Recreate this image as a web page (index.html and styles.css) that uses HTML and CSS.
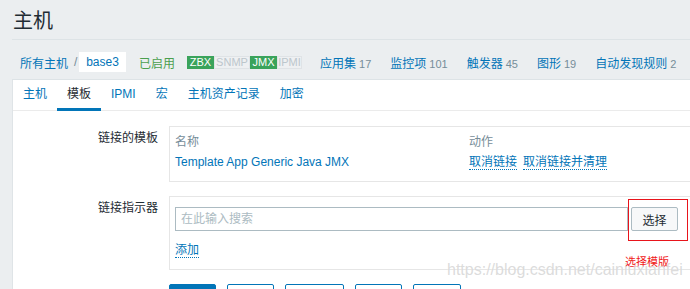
FILE: index.html
```html
<!DOCTYPE html>
<html lang="zh">
<head>
<meta charset="utf-8">
<link rel="stylesheet" href="styles.css">
</head>
<body>
<div class="page">
  <header class="header"><h1 class="title">主机</h1></header>
  <nav class="nav">
    <div class="crumbs">
      <a class="link">所有主机</a>
      <span class="sep">/</span>
      <span class="current">base3</span>
    </div>
    <span class="status">已启用</span>
    <div class="tags">
      <span class="tag on w27">ZBX</span><span class="tag off w36">SNMP</span><span class="tag on w27">JMX</span><span class="tag off w25">IPMI</span>
    </div>
    <div class="counts">
      <a class="link">应用集<span class="num">17</span></a>
      <a class="link">监控项<span class="num">101</span></a>
      <a class="link">触发器<span class="num">45</span></a>
      <a class="link">图形<span class="num">19</span></a>
      <a class="link">自动发现规则<span class="num">2</span></a>
    </div>
  </nav>
  <section class="panel">
    <ul class="tabs">
      <li class="tab">主机</li>
      <li class="tab active">模板</li>
      <li class="tab">IPMI</li>
      <li class="tab">宏</li>
      <li class="tab">主机资产记录</li>
      <li class="tab">加密</li>
    </ul>
    <div class="form">
      <div class="label">链接的模板</div>
      <div class="box box-table">
        <div class="grid">
          <span class="th">名称</span><span class="th">动作</span>
          <span class="td"><a class="link">Template App Generic Java JMX</a></span>
          <span class="td actions"><a class="link dotted">取消链接</a><a class="link dotted">取消链接并清理</a></span>
        </div>
      </div>
      <div class="label">链接指示器</div>
      <div class="box box-search">
        <div class="search">
          <input class="input" type="text" placeholder="在此输入搜索">
          <button class="btn-select" type="button">选择</button>
        </div>
        <a class="link dotted add">添加</a>
      </div>
      <div class="spacer"></div>
      <div class="buttons">
        <button class="btn primary w47" type="button">更新</button>
        <button class="btn w47" type="button">克隆</button>
        <button class="btn w59" type="button">全克隆</button>
        <button class="btn w47" type="button">删除</button>
        <button class="btn w48" type="button">取消</button>
      </div>
    </div>
  </section>
  <div class="annot-box"></div>
  <div class="annot-text">选择模版</div>
  <div class="watermark">https://blog.csdn.net/cainiuxianfei</div>
</div>
</body>
</html>
```

FILE: styles.css
```css
html, body {
  margin: 0;
  padding: 0;
  overflow: hidden;
  background: #ebeef0;
}
body {
  font-family: "Liberation Sans", Arial, "Noto Sans CJK SC", sans-serif;
  font-size: 12px;
  color: #1f2c33;
}
.page {
  position: relative;
  width: 760px;
  padding-left: 12px;
  height: 289px;
}
.header {
  height: 39px;
  border-bottom: 1px solid #dde3e6;
  box-sizing: content-box;
}
.title {
  margin: 0;
  padding-top: 11px;
  font-size: 20px;
  line-height: 20px;
  font-weight: normal;
  color: #1f2c33;
  padding-left: 1px;
}
.link {
  color: #0275b8;
  text-decoration: none;
}
.nav {
  display: flex;
  align-items: center;
  height: 20px;
  padding: 12px 0 7px 8px;
  border-bottom: 1px solid #dde3e6;
  white-space: nowrap;
}
.crumbs {
  display: flex;
  align-items: center;
}
.crumbs .link {
  width: 48px;
}
.sep {
  color: #768d99;
  margin: 0 2px 0 6px;
  width: 3px;
}
.current {
  background: #fff;
  color: #0275b8;
  height: 20px;
  line-height: 20px;
  width: 47px;
  text-align: center;
}
.status {
  color: #4a9f4e;
  margin-left: 13px;
  width: 36px;
}
.tags {
  display: flex;
  margin-left: 12px;
}
.tag {
  font-size: 11px;
  height: 13px;
  line-height: 13px;
  box-sizing: border-box;
  text-align: center;
}
.w27 { width: 27px; }
.w36 { width: 36px; }
.w25 { width: 25px; }
.tag.on {
  background: #3aa35b;
  color: #fff;
}
.tag.off {
  background: #eef0f2;
  color: #bcc6cc;
  border: 1px solid #dfe3e6;
  line-height: 11px;
}
.counts {
  display: flex;
  gap: 19px;
  margin-left: 18px;
}
.num {
  color: #768d99;
  margin-left: 3px;
  font-size: 11px;
}
.panel {
  background: #fff;
  border-left: 1px solid #dfe4e7;
  height: 209px;
}
.tabs {
  list-style: none;
  margin: 0;
  padding: 0;
  display: flex;
  height: 30px;
  border-bottom: 1px solid #ebebeb;
}
.tab {
  padding: 0 10px;
  height: 28px;
  line-height: 28px;
  color: #0275b8;
  border-bottom: 3px solid transparent;
}
.tab.active {
  color: #1f2c33;
  border-bottom-color: #0275b8;
}
.form {
  display: grid;
  grid-template-columns: 145px 560px;
  column-gap: 11px;
  row-gap: 14px;
  padding-top: 15px;
}
.label {
  text-align: right;
  line-height: 14px;
  padding-top: 5px;
}
.box {
  border: 1px solid #e6e6e6;
  padding-left: 5px;
}
.box-table {
  padding-top: 3px;
  padding-bottom: 9px;
}
.grid {
  display: grid;
  grid-template-columns: 294px auto;
  grid-auto-rows: 20px;
  row-gap: 2px;
  align-items: center;
}
.th {
  color: #768d99;
}
.actions {
  display: flex;
  gap: 6px;
}
.dotted {
  display: inline-block;
  line-height: 14px;
  border-bottom: 1px dotted #0275b8;
}
.box-search {
  padding-top: 10px;
  padding-bottom: 11px;
}
.search {
  display: flex;
  gap: 3px;
  height: 24px;
}
.input {
  width: 453px;
  height: 24px;
  box-sizing: border-box;
  border: 1px solid #acbbc2;
  padding: 0 5px;
  font-family: "Liberation Sans", "Noto Sans CJK SC", sans-serif;
  font-size: 12px;
  margin: 0;
  outline: none;
}
.input::placeholder {
  color: #acbbc2;
}
.btn-select {
  width: 47px;
  height: 24px;
  margin: 0;
  padding: 0;
  background: #f7f8f9;
  border: 1px solid #acbbc2;
  border-radius: 2px;
  color: #1f2c33;
  font-family: "Liberation Sans", "Noto Sans CJK SC", sans-serif;
  font-size: 12px;
}
.add {
  margin-top: 12px;
}
.buttons {
  display: flex;
  gap: 11px;
}
.btn {
  height: 24px;
  margin: 0;
  padding: 0;
  background: #fff;
  border: 1px solid #0275b8;
  border-radius: 2px;
  color: #0275b8;
  font-family: "Liberation Sans", "Noto Sans CJK SC", sans-serif;
  font-size: 12px;
}
.btn.primary {
  background: #0275b8;
  color: #fff;
}
.w47 { width: 47px; }
.w48 { width: 48px; }
.w59 { width: 59px; }
.annot-box {
  position: absolute;
  left: 628px;
  top: 199px;
  width: 58px;
  height: 40px;
  border: 1px solid #e8141b;
}
.annot-text {
  position: absolute;
  left: 625px;
  top: 255px;
  font-size: 11px;
  line-height: 14px;
  color: #f01818;
}
.watermark {
  position: absolute;
  left: 447px;
  top: 261px;
  font-family: "Liberation Sans", Arial, sans-serif;
  font-size: 16px;
  line-height: 18px;
  color: rgba(190, 190, 190, 0.55);
  text-shadow: 0 0 1px rgba(255, 255, 255, 0.9);
  white-space: nowrap;
}
```
